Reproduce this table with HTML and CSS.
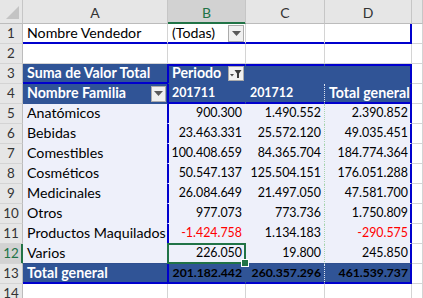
FILE: index.html
```html
<!DOCTYPE html>
<html>
<head>
<meta charset="utf-8">
<link rel="stylesheet" href="styles.css">
</head>
<body>
<div class="sheet">
  <div class="corner"><svg width="23" height="24" viewBox="0 0 23 24"><polygon points="19,6 19,19 6,19" fill="#c4c4c4"/></svg></div>
  <div class="ch">A</div>
  <div class="ch sel">B</div>
  <div class="ch">C</div>
  <div class="ch">D</div>
  <div class="ch"></div>

  <div class="rh">1</div>
  <div class="c bb">Nombre Vendedor</div>
  <div class="c bb split">(Todas)<span class="btn"><svg width="9" height="5" viewBox="0 0 9 5"><polygon points="0,0 9,0 4.5,5" fill="#5a5a5a"/></svg></span></div>
  <div class="c bb"></div>
  <div class="c bb br"></div>
  <div class="c"></div>

  <div class="rh">2</div>
  <div class="c"></div>
  <div class="c"></div>
  <div class="c"></div>
  <div class="c"></div>
  <div class="c"></div>

  <div class="rh">3</div>
  <div class="c ph ar bb">Suma de Valor Total</div>
  <div class="c ph bt bl split">Periodo<span class="btn fbtn"><svg width="12" height="10" viewBox="0 0 12 10"><polygon points="0,5 4,5 2,7.5" fill="#4a4a4a"/><polygon points="4.5,1 11.5,1 9,4.5 9,9 7,9 7,4.5" fill="#3a3a3a"/></svg></span></div>
  <div class="c ph bt"></div>
  <div class="c ph bt br"></div>
  <div class="c"></div>

  <div class="rh">4</div>
  <div class="c ph ar split">Nombre Familia<span class="btn abtn"><svg width="9" height="5" viewBox="0 0 9 5"><polygon points="0,0 9,0 4.5,5" fill="#5a5a5a"/></svg></span></div>
  <div class="c ph bl bb hn">201711</div>
  <div class="c ph bb dl hn">201712</div>
  <div class="c ph bb br">Total general</div>
  <div class="c"></div>

  <div class="rh">5</div>
  <div class="c pd ar">Anatómicos</div>
  <div class="c pd bl num">900.300</div>
  <div class="c pd dg num">1.490.552</div>
  <div class="c pd br num">2.390.852</div>
  <div class="c"></div>

  <div class="rh">6</div>
  <div class="c pd ar">Bebidas</div>
  <div class="c pd bl num">23.463.331</div>
  <div class="c pd dg num">25.572.120</div>
  <div class="c pd br num">49.035.451</div>
  <div class="c"></div>

  <div class="rh">7</div>
  <div class="c pd ar">Comestibles</div>
  <div class="c pd bl num">100.408.659</div>
  <div class="c pd dg num">84.365.704</div>
  <div class="c pd br num">184.774.364</div>
  <div class="c"></div>

  <div class="rh">8</div>
  <div class="c pd ar">Cosméticos</div>
  <div class="c pd bl num">50.547.137</div>
  <div class="c pd dg num">125.504.151</div>
  <div class="c pd br num">176.051.288</div>
  <div class="c"></div>

  <div class="rh">9</div>
  <div class="c pd ar">Medicinales</div>
  <div class="c pd bl num">26.084.649</div>
  <div class="c pd dg num">21.497.050</div>
  <div class="c pd br num">47.581.700</div>
  <div class="c"></div>

  <div class="rh">10</div>
  <div class="c pd ar">Otros</div>
  <div class="c pd bl num">977.073</div>
  <div class="c pd dg num">773.736</div>
  <div class="c pd br num">1.750.809</div>
  <div class="c"></div>

  <div class="rh">11</div>
  <div class="c pd ar">Productos Maquilados</div>
  <div class="c pd bl num neg">-1.424.758</div>
  <div class="c pd dg num">1.134.183</div>
  <div class="c pd br num neg">-290.575</div>
  <div class="c"></div>

  <div class="rh rsel">12</div>
  <div class="c pd ar last">Varios</div>
  <div class="c pd last num active">226.050</div>
  <div class="c pd dg last num">19.800</div>
  <div class="c pd br last num">245.850</div>
  <div class="c"></div>

  <div class="rh">13</div>
  <div class="c pt ar bb tl">Total general</div>
  <div class="c pt bl bb num">201.182.442</div>
  <div class="c pt bb dl num">260.357.296</div>
  <div class="c pt bb br num">461.539.737</div>
  <div class="c"></div>

  <div class="rh">14</div>
  <div class="c"></div>
  <div class="c"></div>
  <div class="c"></div>
  <div class="c"></div>
  <div class="c"></div>
</div>
</body>
</html>
```

FILE: styles.css
```css
* { box-sizing: border-box; margin: 0; padding: 0; }
:root { --blue: #0000cd; --green: #217346; --hdr: #305496; --dat: #eef0fa; }
html, body { margin: 0; background: #fff; overflow: hidden; height: 298px; }
body { font-family: Lato, "Noto Sans", sans-serif; font-size: 14.2px; color: #000; }

.sheet {
  display: grid;
  grid-template-columns: 23px 145px 78px 79px 87px 11px;
  grid-template-rows: 24px repeat(14, 20px);
  width: 423px;
  height: 298px;
  overflow: hidden;
}

.corner { background: #e6e6e6; border-right: 1px solid #c6c6c6; border-bottom: 1px solid #bcbcbc; }
.corner svg { display: block; }

.ch {
  background: #e6e6e6;
  border-right: 1px solid #c6c6c6;
  border-bottom: 1px solid #bcbcbc;
  display: flex; align-items: center; justify-content: center;
  color: #333; padding-top: 2px; font-size: 14px;
}
.ch.sel { background: #d2d2d2; color: var(--green); box-shadow: inset 0 -1px 0 var(--green); border-bottom-color: var(--green); }

.rh {
  background: #e6e6e6;
  border-right: 1px solid #bcbcbc;
  border-bottom: 1px solid #d4d4d4;
  display: flex; align-items: flex-end; justify-content: center;
  color: #333; line-height: 18px; padding-bottom: 1px; font-size: 13.4px;
}
.rh.rsel { background: #d2d2d2; color: var(--green); border-right-color: var(--green); box-shadow: inset -1px 0 0 var(--green); }

.c {
  border-right: 1px solid #d4d4d4;
  border-bottom: 1px solid #d4d4d4;
  display: flex; align-items: flex-end;
  padding: 0 3px 1px 4px;
  white-space: nowrap; overflow: hidden;
  line-height: 18px;
  box-shadow:
    inset 0 calc(-1 * var(--b, 0px)) 0 var(--blue),
    inset calc(-1 * var(--r, 0px)) 0 0 var(--blue),
    inset var(--l, 0px) 0 0 var(--blue),
    inset 0 var(--t, 0px) 0 var(--blue);
}
.num { justify-content: flex-end; font-size: 12.4px; }
.hn { font-size: 12.4px; }
.neg { color: #ff0000; }
.split { justify-content: space-between; padding-right: 0; }

.ph { background: var(--hdr); border-color: var(--hdr); color: #fff; font-weight: bold; }
.pd { background: var(--dat); border-color: var(--dat); }
.pt { background: var(--hdr); border-color: var(--hdr); font-weight: bold; color: #000; }
.pt.num { font-size: 12.2px; }
.pt.tl { color: #fff; }
.last { border-bottom-color: #2f4f8f; }

.bb { border-bottom-color: var(--blue); --b: 1px; }
.br { border-right-color: var(--blue); --r: 1px; }
.bl { --l: 1px; }
.bt { --t: 2px; }
.ar { border-right-color: var(--blue); }
.dg { border-right: 1px dotted #a6d4ae; }
.dl { border-right: 1px dotted #dde3f0; }

.btn {
  align-self: center;
  width: 16px; height: 17px;
  background: #f0f0f0;
  border: 1px solid #ababab;
  display: flex; align-items: center; justify-content: center;
  flex: none;
}
.split .btn { margin-right: 1px; }
.fbtn { height: 15px; margin-top: 1px; }
.abtn { width: 15px; height: 16px; margin-top: 1px; }
.btn svg { display: block; }

.active { position: relative; overflow: visible; --l: 0px; }
.active::after {
  content: "";
  position: absolute;
  left: -1px; top: -1px; right: -1px; bottom: -1px;
  border: 2px solid var(--green);
  pointer-events: none;
}
.active::before {
  content: "";
  position: absolute;
  right: -4px; bottom: -4px;
  width: 6px; height: 6px;
  background: var(--green);
  border: 1px solid #fff;
  z-index: 2;
}
```
